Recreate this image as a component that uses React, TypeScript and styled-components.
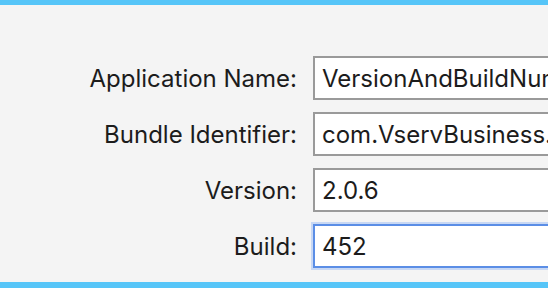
import React from "react";
import styled, { createGlobalStyle } from "styled-components";

const Global = createGlobalStyle`
  html, body { margin: 0; padding: 0; }
  body {
    background: #f4f4f4;
    width: 548px;
    height: 288px;
    overflow: hidden;
    font-family: Inter, "Liberation Sans", Arial, sans-serif;
  }
`;

const Window = styled.div`
  width: 548px;
  height: 288px;
  display: flex;
  flex-direction: column;
  overflow: hidden;
  background: #f4f4f4;
`;

const Bar = styled.div<{ $h: number }>`
  height: ${(p) => p.$h}px;
  background: #56c5f8;
  flex: none;
`;

const Form = styled.div`
  flex: 1;
  display: grid;
  grid-template-columns: 297px 300px;
  grid-auto-rows: 44px;
  column-gap: 16px;
  row-gap: 12px;
  padding-top: 51px;
  align-content: start;
`;

const Label = styled.label`
  justify-self: end;
  align-self: center;
  font-size: 24px;
  color: #1c1c1c;
  white-space: nowrap;
`;

const Field = styled.div<{ $focused?: boolean }>`
  box-sizing: border-box;
  height: 44px;
  background: #fff;
  border: 2px solid ${(p) => (p.$focused ? "#5b8ee6" : "#9a9a9a")};
  box-shadow: ${(p) => (p.$focused ? "0 0 0 2px #c8d8f4" : "none")};
  display: flex;
  align-items: center;
  padding-left: 7px;
  font-size: 24px;
  color: #1c1c1c;
  white-space: nowrap;
  overflow: hidden;
`;

const rows = [
  { label: "Application Name:", value: "VersionAndBuildNumber" },
  { label: "Bundle Identifier:", value: "com.VservBusiness.VersionAndBuildNumber" },
  { label: "Version:", value: "2.0.6" },
  { label: "Build:", value: "452", focused: true },
];

export default function App() {
  return (
    <Window>
      <Global />
      <Bar $h={5} />
      <Form>
        {rows.map((r) => (
          <React.Fragment key={r.label}>
            <Label>{r.label}</Label>
            <Field $focused={r.focused}>{r.value}</Field>
          </React.Fragment>
        ))}
      </Form>
      <Bar $h={6} />
    </Window>
  );
}
